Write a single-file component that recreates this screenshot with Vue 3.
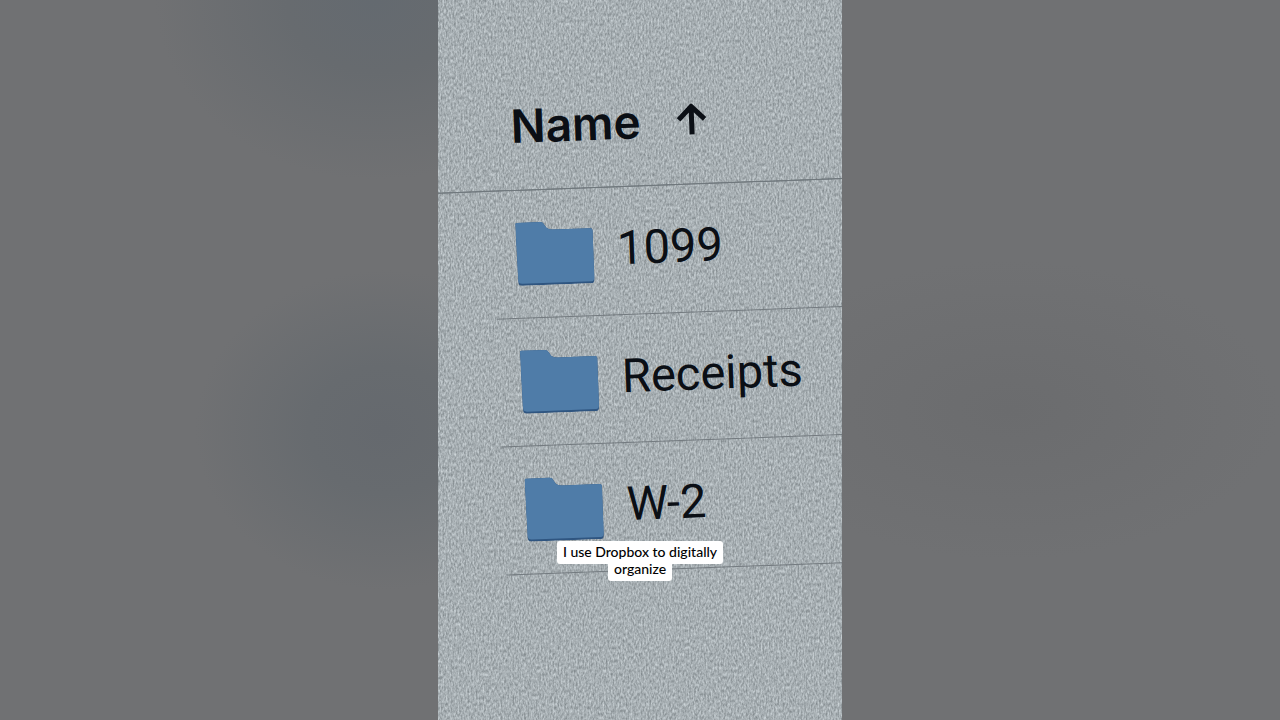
<script setup>
const folders = ['1099', 'Receipts', 'W-2']
const captionLines = ['I use Dropbox to digitally', 'organize']
</script>

<template>
  <main class="stage">
    <section class="video">
      <svg class="grain" aria-hidden="true">
        <filter id="grain" x="0" y="0" width="100%" height="100%" color-interpolation-filters="sRGB">
          <feTurbulence type="fractalNoise" baseFrequency="0.6 0.3" numOctaves="2" seed="4" />
          <feColorMatrix
            values="0.8 0 0 0 0.27  0.8 0 0 0 0.3  0.8 0 0 0 0.315  0 0 0 0 1"
          />
        </filter>
        <rect width="100%" height="100%" filter="url(#grain)" />
      </svg>

      <table class="files">
        <thead>
          <tr>
            <th scope="col">
              <button class="sort" type="button">
                Name
                <svg class="arrow" viewBox="0 0 30 32" aria-hidden="true">
                  <path d="M15 31V3M2 16L15 3L28 16" />
                </svg>
              </button>
            </th>
          </tr>
        </thead>
        <tbody>
          <tr v-for="name in folders" :key="name">
            <td>
              <a class="entry" href="#">
                <svg class="folder" viewBox="0 0 78 64" aria-hidden="true">
                  <path
                    class="folder-edge"
                    d="M0 2Q0 1 2 1H25Q28 1 29 4L31 7Q33 9 37 9H75Q77 9 77 12V60Q77 64 74 64H5Q1 64 1 60Z"
                  />
                  <path
                    class="folder-face"
                    d="M0 2Q0 1 2 1H25Q28 1 29 4L31 7Q33 9 37 9H75Q77 9 77 12V58Q77 62 74 62H5Q1 62 1 58Z"
                  />
                </svg>
                <span>{{ name }}</span>
              </a>
            </td>
          </tr>
        </tbody>
      </table>

      <p class="caption">
        <span v-for="line in captionLines" :key="line">{{ line }}</span>
      </p>
    </section>
  </main>
</template>

<style>
body {
  background: #707173;
}
</style>

<style scoped>
.stage {
  display: flex;
  justify-content: center;
  height: 100vh;
  overflow: hidden;
  background:
    radial-gradient(ellipse 220px 180px at 375px 0, #646a70, #676b6f 40%, #70717300),
    radial-gradient(ellipse 190px 160px at 385px 430px, #65696e, #676b6f 40%, #70717300),
    radial-gradient(ellipse 270px 150px at 1010px 410px, #6b6c6e, #70717300),
    #707173;
}

.video {
  position: relative;
  height: 100%;
  aspect-ratio: 101 / 180;
  overflow: hidden;
  background: #a4acb0;
}

.grain {
  position: absolute;
  inset: 0;
  width: 100%;
  height: 100%;
  opacity: 0.5;
}

.files {
  position: relative;
  width: 120%;
  margin-left: -10px;
  border-collapse: collapse;
  transform: rotate(-2.1deg);
  transform-origin: 0 0;
  color: #0b0f15;
}

th {
  height: 193px;
  padding: 66px 0 0 78px;
  box-sizing: border-box;
  border-bottom: 1px solid #70787d;
  text-align: left;
}

td {
  padding: 0 0 0 57px;
}

.sort {
  display: flex;
  align-items: center;
  gap: 36px;
  padding: 0;
  border: 0;
  background: none;
  color: inherit;
  font: 600 46px/56px Inter, "Liberation Sans", sans-serif;
}

.arrow {
  width: 30px;
  height: 32px;
  fill: none;
  stroke: #0b0f15;
  stroke-width: 5;
}

.entry {
  display: flex;
  align-items: center;
  gap: 23px;
  height: 127px;
  padding-left: 22px;
  border-bottom: 1px solid #737a7f;
  color: inherit;
  font: 400 47px/56px Roboto, "Liberation Sans", sans-serif;
  text-decoration: none;
}

.entry span {
  padding-bottom: 4px;
}

.folder {
  width: 78px;
  height: 64px;
}

.folder-edge {
  fill: #2f5580;
}

.folder-face {
  fill: #4f7ca8;
}

.caption {
  position: absolute;
  right: 0;
  bottom: 139px;
  left: 0;
  display: flex;
  flex-direction: column;
  align-items: center;
  margin: 0;
  color: #000;
  font: 500 14px/17px Lato, "Liberation Sans", sans-serif;
}

.caption span {
  padding: 0 6px 4px;
  border-radius: 0 0 3px 3px;
  background: #fff;
}

.caption span:first-child {
  padding: 2px 6px 4px;
  border-radius: 3px;
  margin-bottom: -4px;
}

.caption span:last-child {
  position: relative;
  background: linear-gradient(#fff0 4px, #fff 4px);
}
</style>
